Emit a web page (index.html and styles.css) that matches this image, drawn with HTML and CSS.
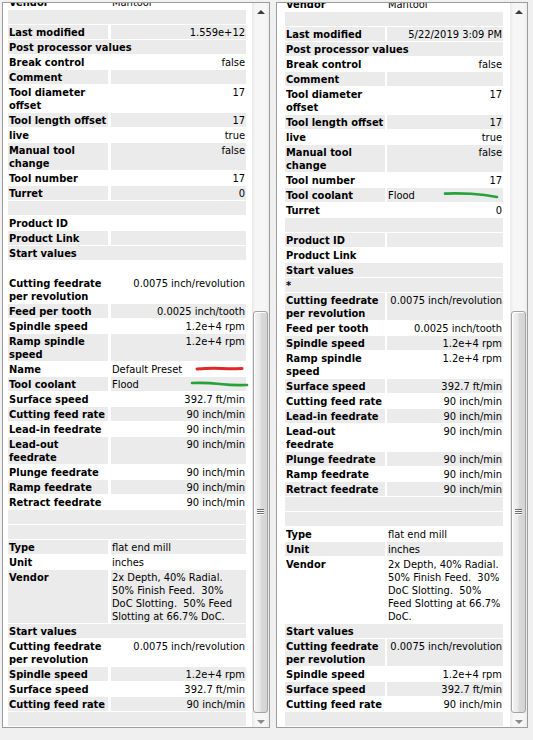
FILE: index.html
```html
<!DOCTYPE html>
<html lang="en">
<head>
    <meta charset="UTF-8">
    <meta name="viewport" content="width=device-width, initial-scale=1.0">
    <title>Tool Properties</title>
    <link rel="stylesheet" href="styles.css">
</head>
<body>
    <div class="screen">
        <!-- left property list -->
        <div class="panel panel-left">
            <div class="list">
                <div class="rows">
                    <div class="row"><div class="k">Vendor</div><div class="v">Mantool</div></div>
                    <div class="gap"></div>
                    <div class="row alt"><div class="k">Last modified</div><div class="v num">1.559e+12</div></div>
                    <div class="head">Post processor values</div>
                    <div class="row"><div class="k">Break control</div><div class="v num">false</div></div>
                    <div class="row alt"><div class="k">Comment</div><div class="v"></div></div>
                    <div class="row"><div class="k">Tool diameter<br>offset</div><div class="v num">17</div></div>
                    <div class="row alt"><div class="k">Tool length offset</div><div class="v num">17</div></div>
                    <div class="row"><div class="k">live</div><div class="v num">true</div></div>
                    <div class="row alt"><div class="k">Manual tool<br>change</div><div class="v num">false</div></div>
                    <div class="row"><div class="k">Tool number</div><div class="v num">17</div></div>
                    <div class="row alt"><div class="k">Turret</div><div class="v num">0</div></div>
                    <div class="gap"></div>
                    <div class="row"><div class="k">Product ID</div><div class="v"></div></div>
                    <div class="row alt"><div class="k">Product Link</div><div class="v"></div></div>
                    <div class="head">Start values</div>
                    <div class="blank"></div>
                    <div class="row"><div class="k">Cutting feedrate<br>per revolution</div><div class="v num">0.0075 inch/revolution</div></div>
                    <div class="row alt"><div class="k">Feed per tooth</div><div class="v num">0.0025 inch/tooth</div></div>
                    <div class="row"><div class="k">Spindle speed</div><div class="v num">1.2e+4 rpm</div></div>
                    <div class="row alt"><div class="k">Ramp spindle<br>speed</div><div class="v num">1.2e+4 rpm</div></div>
                    <div class="row"><div class="k">Name</div><div class="v">Default Preset
                        <svg class="mark mark-red" width="50" height="8" viewBox="0 0 50 8"><path d="M2 4 Q 14 3 26 3.4 T 47 3.6" /></svg>
                    </div></div>
                    <div class="row alt"><div class="k">Tool coolant</div><div class="v">Flood
                        <svg class="mark mark-green" width="60" height="9" viewBox="0 0 60 9"><path d="M2 3 Q 16 2.4 30 4 T 57 5" /></svg>
                    </div></div>
                    <div class="row"><div class="k">Surface speed</div><div class="v num">392.7 ft/min</div></div>
                    <div class="row alt"><div class="k">Cutting feed rate</div><div class="v num">90 inch/min</div></div>
                    <div class="row"><div class="k">Lead-in feedrate</div><div class="v num">90 inch/min</div></div>
                    <div class="row alt"><div class="k">Lead-out<br>feedrate</div><div class="v num">90 inch/min</div></div>
                    <div class="row"><div class="k">Plunge feedrate</div><div class="v num">90 inch/min</div></div>
                    <div class="row alt"><div class="k">Ramp feedrate</div><div class="v num">90 inch/min</div></div>
                    <div class="row"><div class="k">Retract feedrate</div><div class="v num">90 inch/min</div></div>
                    <div class="gap"></div>
                    <div class="gap"></div>
                    <div class="row alt"><div class="k">Type</div><div class="v">flat end mill</div></div>
                    <div class="row"><div class="k">Unit</div><div class="v">inches</div></div>
                    <div class="row alt"><div class="k">Vendor</div><div class="v pre">2x Depth, 40% Radial.<br>50% Finish Feed.  30%<br>DoC Slotting.  50% Feed<br>Slotting at 66.7% DoC.</div></div>
                    <div class="head">Start values</div>
                    <div class="row"><div class="k">Cutting feedrate<br>per revolution</div><div class="v num">0.0075 inch/revolution</div></div>
                    <div class="row alt"><div class="k">Spindle speed</div><div class="v num">1.2e+4 rpm</div></div>
                    <div class="row"><div class="k">Surface speed</div><div class="v num">392.7 ft/min</div></div>
                    <div class="row alt"><div class="k">Cutting feed rate</div><div class="v num">90 inch/min</div></div>
                    <div class="gap"></div>
                </div>
            </div>
            <div class="scrollbar">
                <div class="sb-btn sb-up"><span class="tri-up"></span></div>
                <div class="sb-track"><div class="thumb"><span class="grip"></span></div></div>
                <div class="sb-btn sb-down"><span class="tri-down"></span></div>
            </div>
        </div>

        <!-- right property list -->
        <div class="panel panel-right">
            <div class="list">
                <div class="rows">
                    <div class="row"><div class="k">Vendor</div><div class="v">Mantool</div></div>
                    <div class="gap"></div>
                    <div class="row alt"><div class="k">Last modified</div><div class="v num">5/22/2019 3:09 PM</div></div>
                    <div class="head">Post processor values</div>
                    <div class="row"><div class="k">Break control</div><div class="v num">false</div></div>
                    <div class="row alt"><div class="k">Comment</div><div class="v"></div></div>
                    <div class="row"><div class="k">Tool diameter<br>offset</div><div class="v num">17</div></div>
                    <div class="row alt"><div class="k">Tool length offset</div><div class="v num">17</div></div>
                    <div class="row"><div class="k">live</div><div class="v num">true</div></div>
                    <div class="row alt"><div class="k">Manual tool<br>change</div><div class="v num">false</div></div>
                    <div class="row"><div class="k">Tool number</div><div class="v num">17</div></div>
                    <div class="row alt"><div class="k">Tool coolant</div><div class="v">Flood
                        <svg class="mark mark-green2" width="58" height="9" viewBox="0 0 58 9"><path d="M2 2.6 Q 14 2 28 2.8 T 54 6" /></svg>
                    </div></div>
                    <div class="row"><div class="k">Turret</div><div class="v num">0</div></div>
                    <div class="gap"></div>
                    <div class="row alt"><div class="k">Product ID</div><div class="v"></div></div>
                    <div class="row"><div class="k">Product Link</div><div class="v"></div></div>
                    <div class="head">Start values</div>
                    <div class="head">*</div>
                    <div class="row alt"><div class="k">Cutting feedrate<br>per revolution</div><div class="v num">0.0075 inch/revolution</div></div>
                    <div class="row"><div class="k">Feed per tooth</div><div class="v num">0.0025 inch/tooth</div></div>
                    <div class="row alt"><div class="k">Spindle speed</div><div class="v num">1.2e+4 rpm</div></div>
                    <div class="row"><div class="k">Ramp spindle<br>speed</div><div class="v num">1.2e+4 rpm</div></div>
                    <div class="row alt"><div class="k">Surface speed</div><div class="v num">392.7 ft/min</div></div>
                    <div class="row"><div class="k">Cutting feed rate</div><div class="v num">90 inch/min</div></div>
                    <div class="row alt"><div class="k">Lead-in feedrate</div><div class="v num">90 inch/min</div></div>
                    <div class="row"><div class="k">Lead-out<br>feedrate</div><div class="v num">90 inch/min</div></div>
                    <div class="row alt"><div class="k">Plunge feedrate</div><div class="v num">90 inch/min</div></div>
                    <div class="row"><div class="k">Ramp feedrate</div><div class="v num">90 inch/min</div></div>
                    <div class="row alt"><div class="k">Retract feedrate</div><div class="v num">90 inch/min</div></div>
                    <div class="gap"></div>
                    <div class="gap"></div>
                    <div class="row"><div class="k">Type</div><div class="v">flat end mill</div></div>
                    <div class="row alt"><div class="k">Unit</div><div class="v">inches</div></div>
                    <div class="row"><div class="k">Vendor</div><div class="v pre">2x Depth, 40% Radial.<br>50% Finish Feed.  30%<br>DoC Slotting.  50%<br>Feed Slotting at 66.7%<br>DoC.</div></div>
                    <div class="head">Start values</div>
                    <div class="row alt"><div class="k">Cutting feedrate<br>per revolution</div><div class="v num">0.0075 inch/revolution</div></div>
                    <div class="row"><div class="k">Spindle speed</div><div class="v num">1.2e+4 rpm</div></div>
                    <div class="row alt"><div class="k">Surface speed</div><div class="v num">392.7 ft/min</div></div>
                    <div class="row"><div class="k">Cutting feed rate</div><div class="v num">90 inch/min</div></div>
                    <div class="gap"></div>
                </div>
            </div>
            <div class="scrollbar">
                <div class="sb-btn sb-up"><span class="tri-up"></span></div>
                <div class="sb-track"><div class="thumb"><span class="grip"></span></div></div>
                <div class="sb-btn sb-down"><span class="tri-down"></span></div>
            </div>
        </div>
    </div>
</body>
</html>
```

FILE: styles.css
```css
body {
    margin: 0;
    background-color: #f0f0f0;
    font-family: "DejaVu Sans Condensed", "DejaVu Sans", sans-serif;
    font-stretch: semi-condensed;
    font-size: 11px;
    color: #000;
}
.screen {
    display: flex;
    gap: 6px;
    padding: 2px 0 0 2px;
    height: 738px;
    box-sizing: border-box;
}
.panel {
    display: flex;
    height: 726px;
    box-sizing: border-box;
    border: 1px solid #9c9c9c;
    background-color: #ffffff;
}
.panel-left {
    width: 268px;
}
.panel-right {
    width: 252px;
}
.list {
    flex: 1;
    display: flex;
    flex-direction: column;
    justify-content: flex-end;
    overflow: hidden;
}
.panel-left .list {
    padding: 0 6px 0 5px;
}
.panel-right .list {
    padding: 0 7px 0 8px;
}
.row {
    display: grid;
    grid-template-columns: 100px 1fr;
    column-gap: 3px;
    margin-bottom: 1px;
}
.panel-right .row {
    column-gap: 2px;
}
.k, .v, .head {
    padding: 1px 1px 0;
    line-height: 13px;
    min-height: 13px;
}
.k, .head {
    font-weight: bold;
    white-space: nowrap;
}
.v {
    position: relative;
}
.num {
    text-align: right;
}
.pre {
    white-space: pre;
}
.row.alt .k, .row.alt .v {
    background-color: #ebebeb;
}
.head {
    background-color: #ebebeb;
    margin-bottom: 1px;
}
.gap, .blank {
    height: 14px;
    margin-bottom: 1px;
}
.gap {
    background-color: #ebebeb;
}

/* hand drawn marks */
.mark {
    position: absolute;
    fill: none;
    stroke-linecap: round;
    overflow: visible;
}
.mark-red {
    left: 84px;
    top: 3px;
    stroke: #e02828;
    stroke-width: 3;
}
.mark-green {
    left: 79px;
    top: 3px;
    stroke: #26a23a;
    stroke-width: 2.6;
}
.mark-green2 {
    left: 56px;
    top: 3px;
    stroke: #26a23a;
    stroke-width: 2.6;
}

/* scrollbar */
.scrollbar {
    width: 17px;
    display: flex;
    flex-direction: column;
    background: linear-gradient(to right, #e9e9e9, #f6f6f6 20%, #f6f6f6 80%, #ececec);
}
.sb-btn {
    display: flex;
    align-items: center;
    justify-content: center;
}
.sb-up {
    height: 17px;
}
.sb-down {
    height: 14px;
    padding-top: 3px;
    box-sizing: border-box;
}
.tri-up {
    border-left: 4px solid transparent;
    border-right: 4px solid transparent;
    border-bottom: 4px solid #3c3c3c;
}
.tri-down {
    border-left: 4px solid transparent;
    border-right: 4px solid transparent;
    border-top: 4px solid #8a8a8a;
}
.sb-track {
    flex: 1;
    display: flex;
    flex-direction: column;
    justify-content: flex-end;
    padding: 0 1px;
}
.thumb {
    height: 402px;
    box-sizing: border-box;
    border: 1px solid #a3a3a3;
    border-radius: 3px;
    background: linear-gradient(to right, #f4f4f4, #e8e8e8 45%, #d9d9d9 55%, #d4d4d4);
    box-shadow: inset 1px 1px 0 #fdfdfd;
    display: flex;
    align-items: center;
    justify-content: center;
}
.grip {
    width: 7px;
    height: 6px;
    background: repeating-linear-gradient(to bottom, #6e6e6e 0 1px, #fbfbfb 1px 2px);
}
```
